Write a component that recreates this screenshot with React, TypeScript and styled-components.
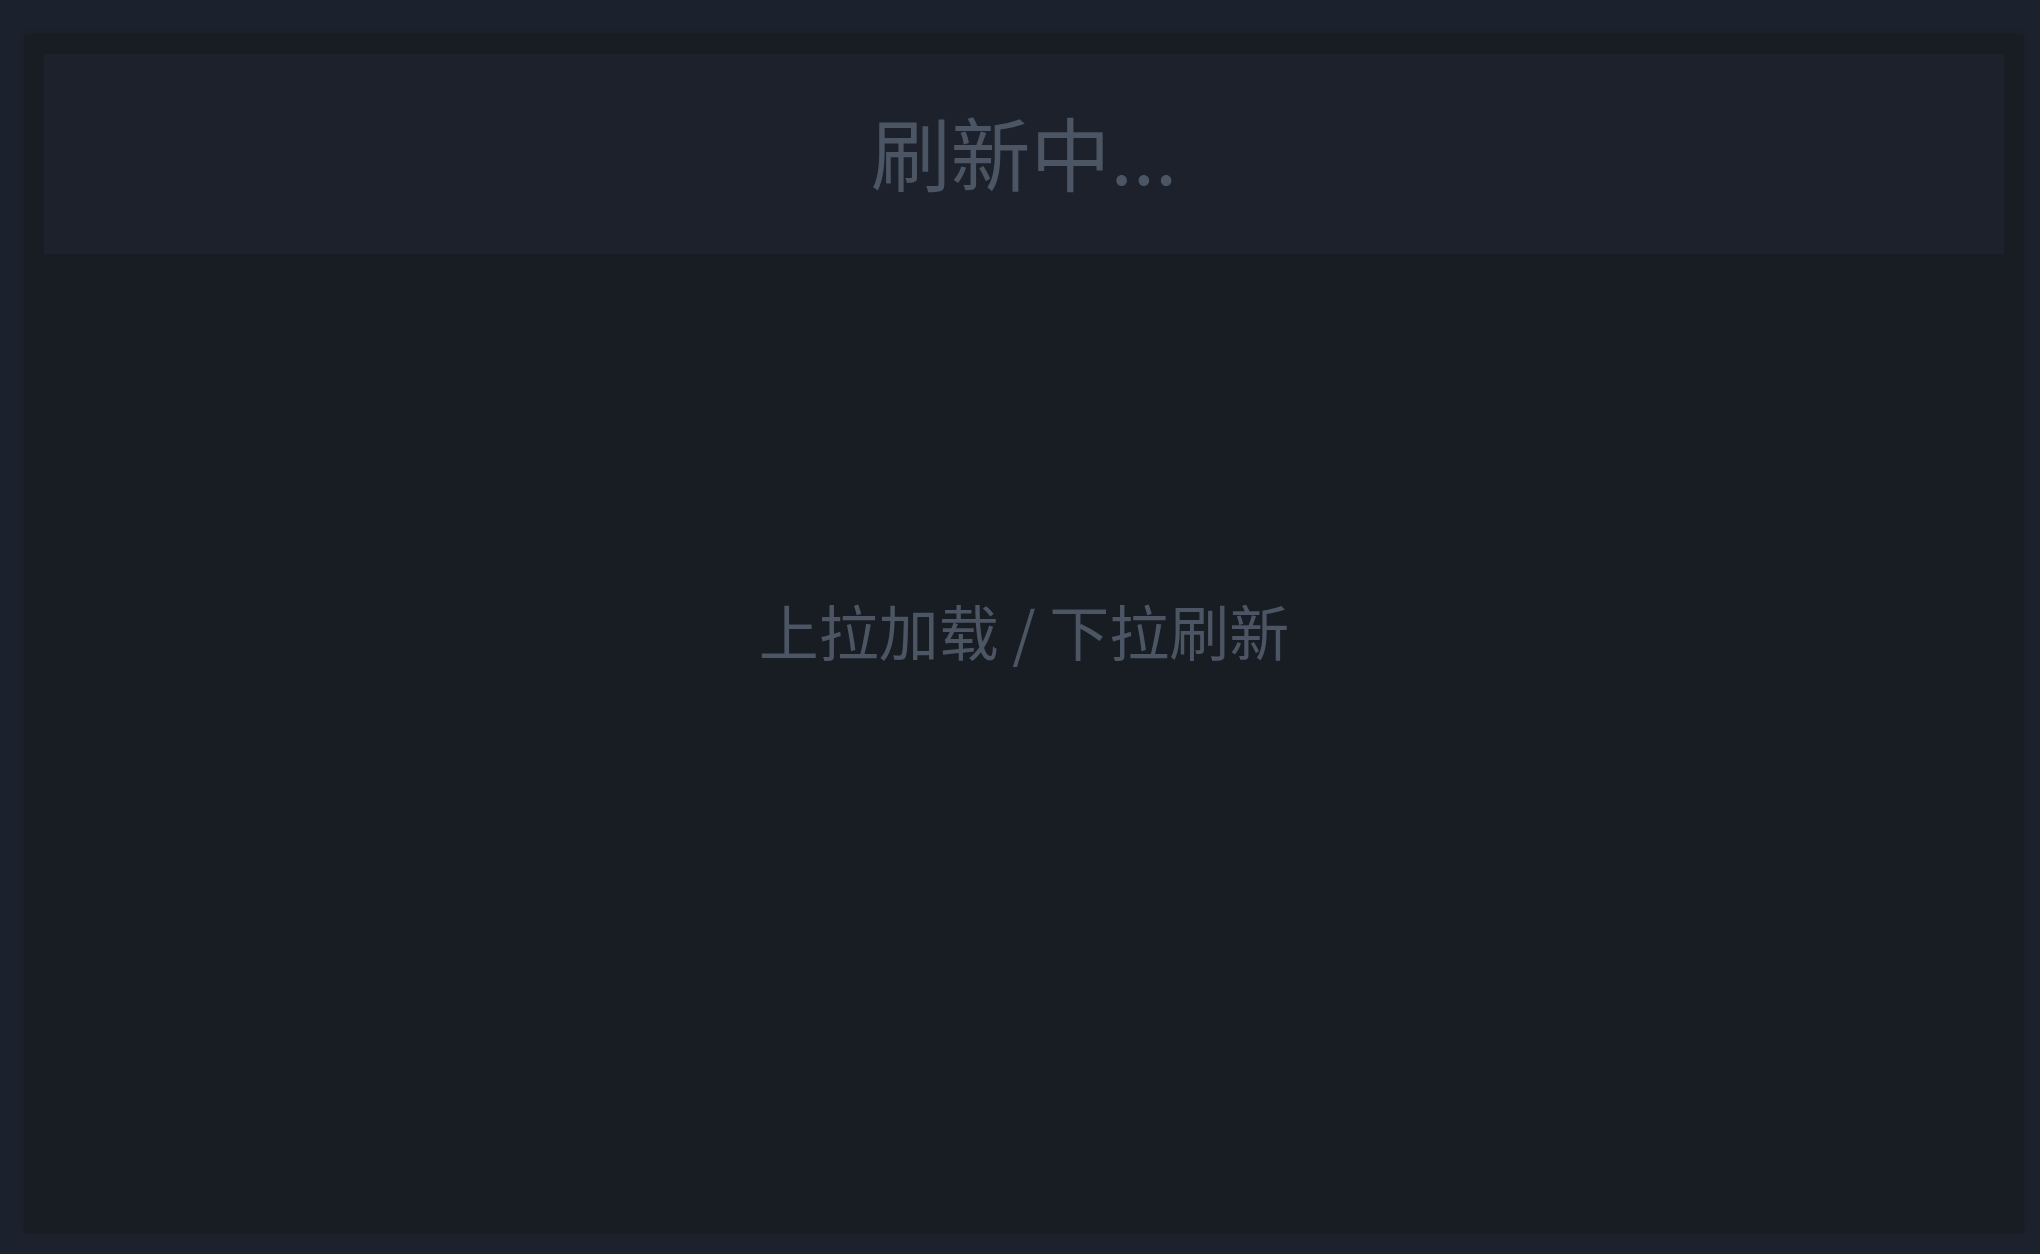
import React from "react";
import styled, { createGlobalStyle } from "styled-components";

const Global = createGlobalStyle`
  html, body {
    margin: 0;
    padding: 0;
    background: #1c222d;
    font-family: "Noto Sans CJK SC", "Noto Sans", sans-serif;
  }
`;

const Page = styled.div`
  padding: 34px 16px 21px 24px;
  box-sizing: border-box;
  min-height: 1254px;
`;

const Panel = styled.div`
  background: #181c23;
  border-radius: 4px;
  box-shadow: 0 0 4px rgba(0, 0, 0, 0.25);
  height: 1199px;
  padding: 20px;
  box-sizing: border-box;
  display: flex;
  flex-direction: column;
`;

const Header = styled.div`
  height: 200px;
  box-sizing: border-box;
  padding-bottom: 8px;
  background: #1c212b;
  display: flex;
  align-items: center;
  justify-content: center;
`;

const Label = styled.div<{ $size: number }>`
  color: #4b5563;
  font-size: ${(p) => p.$size}px;
  line-height: 1.2;
  text-align: center;
  white-space: nowrap;
`;

const Body = styled.div`
  flex: 1;
  display: flex;
  justify-content: center;
  padding-top: 340px;
`;

export default function App() {
  return (
    <>
      <Global />
      <Page>
        <Panel>
          <Header>
            <Label $size={80}>刷新中...</Label>
          </Header>
          <Body>
            <Label $size={60}>上拉加载 / 下拉刷新</Label>
          </Body>
        </Panel>
      </Page>
    </>
  );
}
